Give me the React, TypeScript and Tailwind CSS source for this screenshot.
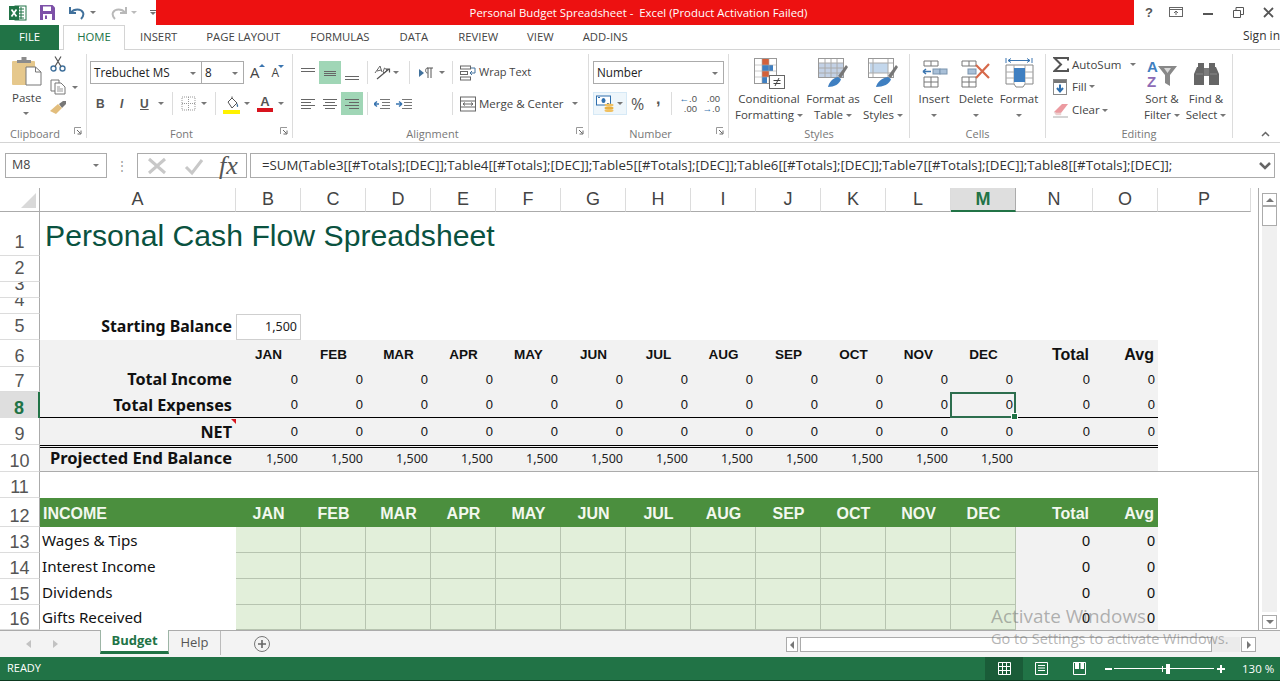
import React from "react"

// ++++++++++++++++++++++++++++++++++++++++++++++++++++++++++++++++++++++++++++++++++++++++++
// data
// ++++++++++++++++++++++++++++++++++++++++++++++++++++++++++++++++++++++++++++++++++++++++++

const months = ["JAN", "FEB", "MAR", "APR", "MAY", "JUN", "JUL", "AUG", "SEP", "OCT", "NOV", "DEC"]
const letters = ["B", "C", "D", "E", "F", "G", "H", "I", "J", "K", "L"]
const formula = "=SUM(Table3[[#Totals];[DEC]];Table4[[#Totals];[DEC]];Table5[[#Totals];[DEC]];Table6[[#Totals];[DEC]];Table7[[#Totals];[DEC]];Table8[[#Totals];[DEC]];"

const ui = "font-['Open_Sans',sans-serif]"
const arial = "font-['Liberation_Sans',sans-serif]"
const treb = "font-['Noto_Sans',sans-serif]"

// ++++++++++++++++++++++++++++++++++++++++++++++++++++++++++++++++++++++++++++++++++++++++++
// small bits
// ++++++++++++++++++++++++++++++++++++++++++++++++++++++++++++++++++++++++++++++++++++++++++

function Caret({ className = "" }: { className?: string }) {
    return <span className={`inline-block w-0 h-0 border-l-[3px] border-r-[3px] border-t-[3px] border-l-transparent border-r-transparent border-t-[#777] ${className}`} />
}

function Sep({ className = "" }: { className?: string }) {
    return <span className={`block w-px h-[23px] bg-[#dcdcdc] ${className}`} />
}

function Launcher({ className = "" }: { className?: string }) {
    return (
        <svg width="8" height="8" viewBox="0 0 8 8" className={`absolute bottom-[3px] ${className}`}>
            <path d="M0.5 7V0.5H7" fill="none" stroke="#999" />
            <path d="M3 3L6.5 6.5M7 3.5V7H3.5" fill="none" stroke="#666" />
        </svg>
    )
}

function Lines({ rows }: { rows: number[][] }) {
    return (
        <svg width="16" height="16" viewBox="0 0 16 16">
            {rows.map(([a, b, y], i) => <path key={i} d={`M${a} ${y + 0.5}H${b}`} stroke="#666" />)}
        </svg>
    )
}

function ToggleBox({ on, children, className = "" }: { on?: boolean; children: React.ReactNode; className?: string }) {
    return <span className={`flex w-[22px] h-[23px] items-center justify-center ${on ? "bg-[#a0d6b6]" : ""} ${className}`}>{children}</span>
}

function Big({ w, icon, top, bottom, caret }: { w: string; icon: React.ReactNode; top: string; bottom?: string; caret?: boolean }) {
    return (
        <div className={`${w} flex flex-col items-center pt-[4px] text-[11.5px] leading-[16px] text-[#444]`}>
            <div className="h-[31px] mb-[2px] flex items-center justify-center">{icon}</div>
            <span className="whitespace-nowrap">{top}</span>
            <span className="whitespace-nowrap flex items-center gap-[3px] h-[16px]">
                {bottom}
                {caret && <Caret />}
            </span>
        </div>
    )
}

function Group({ w, label, launcher, children }: { w: string; label: string; launcher?: boolean; children: React.ReactNode }) {
    return (
        <div className={`${w} h-[84px] shrink-0 border-r border-[#dcdcdc] relative`}>
            <div className="h-[73px]">{children}</div>
            <div className={`h-[11px] leading-[13px] text-center text-[11px] text-[#777] ${launcher ? "pr-[16px]" : ""}`}>{label}</div>
            {launcher && <Launcher className="right-[4px]" />}
        </div>
    )
}

// ++++++++++++++++++++++++++++++++++++++++++++++++++++++++++++++++++++++++++++++++++++++++++
// icons
// ++++++++++++++++++++++++++++++++++++++++++++++++++++++++++++++++++++++++++++++++++++++++++

const ExcelLogo = () => (
    <svg width="18" height="18" viewBox="0 0 18 18">
        <rect x="6" y="2" width="11" height="14" fill="#fff" stroke="#217346" />
        <path d="M10 5h5M10 8h5M10 11h5M10 14h5M12 3v12" stroke="#217346" />
        <rect x="0" y="2" width="10" height="14" fill="#217346" />
        <path d="M2.5 5.5L7.5 12.5M7.5 5.5L2.5 12.5" stroke="#fff" strokeWidth="1.7" />
    </svg>
)
const SaveIcon = () => (
    <svg width="15" height="15" viewBox="0 0 15 15">
        <path d="M0 0H12.5L15 2.5V15H0Z" fill="#7d51a8" />
        <rect x="3" y="1.5" width="8" height="4.5" fill="#fff" />
        <rect x="3" y="9" width="9" height="6" fill="#fff" />
        <rect x="5" y="10.5" width="2" height="3.5" fill="#7d51a8" />
    </svg>
)
const UndoIcon = ({ color }: { color: string }) => (
    <svg width="16" height="14" viewBox="0 0 16 14">
        <path d="M1 1V7H7" fill="none" stroke={color} strokeWidth="2" />
        <path d="M2 6.5C5 2.5 12 2.5 14 6.5C15 9 14 11 12 13" fill="none" stroke={color} strokeWidth="2" />
    </svg>
)
const PasteIcon = () => (
    <svg width="30" height="31" viewBox="0 0 30 31">
        <rect x="0" y="4" width="23" height="24" rx="1" fill="#e6c88c" />
        <path d="M5 5V3H9.5V0H14.5V3H19V6H5Z" fill="#8c8c8c" />
        <path d="M14 10H23.5L29 15V28H14Z" fill="#fff" stroke="#777" />
        <path d="M23.5 10V15H29" fill="none" stroke="#777" />
    </svg>
)
const ScissorsIcon = () => (
    <svg width="16" height="16" viewBox="0 0 16 16">
        <circle cx="3.5" cy="12.5" r="2.5" fill="none" stroke="#41719c" strokeWidth="1.4" />
        <circle cx="12.5" cy="12.5" r="2.5" fill="none" stroke="#41719c" strokeWidth="1.4" />
        <path d="M5 10.5L11 0.5M11 10.5L5 0.5" stroke="#555" strokeWidth="1.2" />
    </svg>
)
const CopyIcon = () => (
    <svg width="16" height="16" viewBox="0 0 16 16">
        <path d="M1 1H9V12H1Z" fill="#fff" stroke="#777" />
        <path d="M5 4H11L15 8V15H5Z" fill="#fff" stroke="#777" />
        <path d="M7 8H10M7 10H13M7 12H13" stroke="#999" />
    </svg>
)
const BrushIcon = () => (
    <svg width="17" height="14" viewBox="0 0 17 14">
        <path d="M9 3L13 0H16V3L12 7Z" fill="#777" />
        <path d="M0 10L8 3L12 7L6 13Z" fill="#e2bd7c" />
    </svg>
)
const BordersIcon = () => (
    <svg width="15" height="15" viewBox="0 0 15 15">
        <rect x="1" y="1" width="13" height="13" fill="none" stroke="#999" strokeDasharray="1 1" />
        <path d="M7.5 1V14M1 7.5H14" stroke="#999" strokeDasharray="1 1" />
    </svg>
)
const FillIcon = () => (
    <svg width="17" height="18" viewBox="0 0 17 18">
        <path d="M5 6L9 2L14 7L9 12Z" fill="#fff" stroke="#555" />
        <path d="M9 2V0.5" stroke="#555" />
        <path d="M14 7C15.5 9 15.5 11 14.5 11C13.5 11 13.5 9 14 7Z" fill="#41719c" />
        <rect x="0" y="14" width="17" height="4" fill="#fff200" />
    </svg>
)
const OrientationIcon = () => (
    <svg width="18" height="17" viewBox="0 0 18 17">
        <path d="M1 9L6 2L8 8M3 7L7 6" fill="none" stroke="#666" />
        <path d="M9 8L10.5 4L13 6L10 9Z" fill="none" stroke="#666" />
        <path d="M3 15L15 5M12 5H15.5V8.5" fill="none" stroke="#555" strokeWidth="1.2" />
    </svg>
)
const RtlIcon = () => (
    <svg width="14" height="12" viewBox="0 0 14 12">
        <path d="M0 2L5 6L0 10Z" fill="#41719c" />
        <path d="M8 1H14M9 1V11M12 1V11M8.5 1C6 1 6 6 8.5 6" fill="none" stroke="#555" />
    </svg>
)
const WrapIcon = () => (
    <svg width="17" height="16" viewBox="0 0 17 16">
        <rect x="0.5" y="1" width="10" height="3" fill="none" stroke="#666" />
        <rect x="0.5" y="6.5" width="7" height="3" fill="none" stroke="#666" />
        <rect x="0.5" y="12" width="10" height="3" fill="none" stroke="#666" />
        <path d="M11 3H15V8H10M12 6L10 8L12 10" fill="none" stroke="#41719c" />
    </svg>
)
const MergeIcon = () => (
    <svg width="17" height="16" viewBox="0 0 17 16">
        <rect x="0.5" y="1" width="15" height="14" fill="#fff" stroke="#666" />
        <path d="M1 5H15M1 11H15M3 8H13M3 8L5 6.5M3 8L5 9.5M13 8L11 6.5M13 8L11 9.5" fill="none" stroke="#666" />
    </svg>
)
const IndentIcon = ({ flip }: { flip?: boolean }) => (
    <svg width="16" height="12" viewBox="0 0 16 12">
        <path d="M6 1.5H16M8 4.5H16M8 7.5H16M6 10.5H16" stroke="#777" />
        {flip
            ? <path d="M5 6H0M0 6L3 3.5M0 6L3 8.5" fill="none" stroke="#3a75b0" strokeWidth="1.4" />
            : <path d="M0 6H6M6 6L3 3.5M6 6L3 8.5" fill="none" stroke="#3a75b0" strokeWidth="1.4" />}
    </svg>
)
const AccountingIcon = () => (
    <svg width="18" height="17" viewBox="0 0 18 17">
        <rect x="0.5" y="1" width="14" height="9" fill="#fff" stroke="#2f6fae" />
        <ellipse cx="7.5" cy="5.5" rx="2" ry="2.5" fill="#2f6fae" />
        <path d="M2 2.5h2M11 8.5h2" stroke="#2f6fae" />
        <ellipse cx="13" cy="10" rx="4.5" ry="1.5" fill="#f0c060" />
        <ellipse cx="13" cy="13" rx="4.5" ry="1.5" fill="#e8b040" />
        <ellipse cx="13" cy="15.5" rx="4.5" ry="1.5" fill="#f0c060" />
    </svg>
)
const CondFormatIcon = () => (
    <svg width="31" height="31" viewBox="0 0 31 31">
        <rect x="0.5" y="0.5" width="22" height="25" fill="#fff" stroke="#999" />
        <rect x="8" y="1" width="7" height="6" fill="#d3603a" />
        <rect x="8" y="7" width="11" height="6" fill="#3f7fc1" />
        <rect x="8" y="13" width="7" height="6" fill="#d3603a" />
        <rect x="8" y="19" width="5" height="6" fill="#3f7fc1" />
        <path d="M1 7H22M1 13H22M1 19H22M8 1V25M15 1V25" stroke="#aaa" fill="none" opacity="0.6" />
        <rect x="15.5" y="17.5" width="15" height="13" fill="#fff" stroke="#666" />
        <path d="M19.5 22.5H26.5M19.5 25.5H26.5M25 20L21 28" stroke="#444" fill="none" />
    </svg>
)
const TableIcon = () => (
    <svg width="31" height="31" viewBox="0 0 31 31">
        <rect x="0.5" y="0.5" width="25" height="19" fill="#fff" stroke="#999" />
        <rect x="1" y="5" width="24" height="14" fill="#c3d1e5" />
        <path d="M1 5H25M1 10H25M1 15H25M7 1V19M13 1V19M19 1V19" stroke="#aaa" fill="none" />
        <path d="M20 18L28 7L30 9L23 20Z" fill="#777" />
        <path d="M10 29C11 24 15 20 20 19L23 21C22 26 16 29 10 29Z" fill="#3f7fc1" />
    </svg>
)
const CellStyleIcon = () => (
    <svg width="31" height="31" viewBox="0 0 31 31">
        <rect x="0.5" y="0.5" width="25" height="19" fill="#fff" stroke="#999" />
        <rect x="2" y="5" width="18" height="10" fill="#c3d7ec" />
        <path d="M1 5H25M1 15H25M5 1V19M20 1V19" stroke="#aaa" fill="none" />
        <path d="M20 18L28 7L30 9L23 20Z" fill="#777" />
        <path d="M8 29C9 24 14 20 20 19L23 21C22 26 15 29 8 29Z" fill="#3f7fc1" />
    </svg>
)
const InsertIcon = () => (
    <svg width="27" height="28" viewBox="0 0 27 28">
        <path d="M3 1H17V6H3ZM10 1V6M3 17H17V27H3ZM10 17V27M3 22H17" fill="#fff" stroke="#777" />
        <rect x="12" y="9" width="7" height="5" fill="#a9c0d8" stroke="#7a94ae" />
        <rect x="19" y="9" width="7" height="5" fill="#a9c0d8" stroke="#7a94ae" />
        <path d="M10 11.5H2M2 11.5L5 9M2 11.5L5 14" stroke="#3a75b0" strokeWidth="1.5" fill="none" />
    </svg>
)
const DeleteIcon = () => (
    <svg width="31" height="28" viewBox="0 0 31 28">
        <path d="M1 1H15V6H1ZM8 1V6M1 17H15V27H1ZM8 17V27M1 22H15" fill="#fff" stroke="#777" />
        <rect x="7" y="9" width="8" height="5" fill="#a9c0d8" stroke="#7a94ae" />
        <path d="M15 5L28 18M28 4L15 18" stroke="#d6694a" strokeWidth="2.2" />
    </svg>
)
const FormatIcon = () => (
    <svg width="29" height="31" viewBox="0 0 29 31">
        <path d="M1 0V5M27 0V5M3 2.5H25M3 2.5L6 0.5M3 2.5L6 4.5M25 2.5L22 0.5M25 2.5L22 4.5" stroke="#3a75b0" fill="none" />
        <path d="M1 7H28V26H20L18 29H11L9 26H1Z" fill="#fff" stroke="#888" />
        <path d="M1 14H28M1 20H28M9 7V26M20 7V26" stroke="#aaa" fill="none" />
        <rect x="9" y="10" width="11" height="14" fill="#3f7fc1" />
    </svg>
)
const SigmaIcon = () => (
    <svg width="16" height="15" viewBox="0 0 16 15">
        <path d="M15 3.5V1H1.5L8 7.5L1.5 14H15V11.5" fill="none" stroke="#555" strokeWidth="2" />
    </svg>
)
const FillDownIcon = () => (
    <svg width="14" height="16" viewBox="0 0 14 16">
        <rect x="0.5" y="0.5" width="13" height="15" fill="#fff" stroke="#888" />
        <rect x="1" y="1" width="12" height="3" fill="#777" />
        <path d="M7 5.5V12M4 9L7 12.5L10 9" fill="none" stroke="#2f6fae" strokeWidth="2" />
    </svg>
)
const EraserIcon = () => (
    <svg width="16" height="15" viewBox="0 0 16 15">
        <path d="M1 9L9 1H15L8 10H3Z" fill="#ec9aa0" />
        <path d="M1 9L3 12H8L8 10H3Z" fill="#f5c8c8" stroke="#ddd" strokeWidth="0.5" />
        <path d="M0 14H15" stroke="#aaa" />
    </svg>
)
const SortIcon = () => (
    <svg width="31" height="29" viewBox="0 0 31 29">
        <text x="0" y="13" className={arial} fontSize="15" fontWeight="700" fill="#3f7fc1">A</text>
        <text x="0" y="28" className={arial} fontSize="15" fontWeight="700" fill="#8d6bb5">Z</text>
        <path d="M11 7H30L23 16V27L18 24V16Z" fill="#888" />
        <path d="M17 9H24L20.5 14Z" fill="#d8d8d8" />
    </svg>
)
const BinocularsIcon = () => (
    <svg width="27" height="24" viewBox="0 0 27 24">
        <path d="M1 23V12L4 5H5V1H11V23Z" fill="#666" />
        <path d="M26 23V12L23 5H22V1H16V23Z" fill="#666" />
        <path d="M3 12H10M17 12H24" stroke="#8a8a8a" />
        <rect x="11" y="6" width="5" height="8" fill="#7d7d7d" />
    </svg>
)

// ++++++++++++++++++++++++++++++++++++++++++++++++++++++++++++++++++++++++++++++++++++++++++
// ribbon
// ++++++++++++++++++++++++++++++++++++++++++++++++++++++++++++++++++++++++++++++++++++++++++

function TitleBar() {
    return (
        <div className="h-[25px] flex bg-white shrink-0">
            <div className="w-[156px] flex items-center pl-[9px]">
                <ExcelLogo />
                <span className="ml-[13px]"><SaveIcon /></span>
                <span className="ml-[14px]"><UndoIcon color="#41719c" /></span>
                <Caret className="ml-[5px]" />
                <span className="ml-[15px] -scale-x-100"><UndoIcon color="#b9b9b9" /></span>
                <Caret className="ml-[4px] opacity-50" />
                <span className="ml-[13px] flex flex-col items-center gap-[1px]">
                    <span className="w-[6px] h-px bg-[#666]" />
                    <Caret />
                </span>
            </div>
            <div className="w-[978px] bg-[#ed1111] text-white text-[11.4px] pr-[13px] flex items-center justify-center">
                Personal Budget Spreadsheet -&nbsp; Excel (Product Activation Failed)
            </div>
            <div className="flex-1 flex items-center pl-[11px] text-[#555]">
                <span className={`${arial} font-bold text-[13px] w-[24px]`}>?</span>
                <svg width="15" height="11" viewBox="0 0 15 11"><rect x="0.5" y="0.5" width="13" height="9" fill="none" stroke="#666" /><path d="M1 2.5H13M7 8V4M5 6L7 4L9 6" fill="none" stroke="#666" /></svg>
                <span className="w-[10px] h-[2px] bg-[#555] ml-[19px] mt-[3px]" />
                <svg width="11" height="11" viewBox="0 0 11 11" className="ml-[20px]"><path d="M0.5 3.5H7.5V10.5H0.5ZM3 3V0.5H10.5V7.5H8" fill="none" stroke="#555" /></svg>
                <svg width="11" height="11" viewBox="0 0 11 11" className="ml-[19px]"><path d="M1 1L10 10M10 1L1 10" stroke="#555" strokeWidth="1.8" /></svg>
            </div>
        </div>
    )
}

function TabRow() {
    const tabs = [
        ["INSERT", "ml-[15px]"],
        ["PAGE LAYOUT", "ml-[29px]"],
        ["FORMULAS", "ml-[30px]"],
        ["DATA", "ml-[30px]"],
        ["REVIEW", "ml-[30px]"],
        ["VIEW", "ml-[29px]"],
        ["ADD-INS", "ml-[29px]"],
    ]
    return (
        <div className="h-[25px] flex items-center bg-white shrink-0 text-[11.3px] text-[#444] border-b border-[#d4d4d4] relative">
            <div className="w-[59px] h-[25px] bg-[#217346] text-white flex items-center justify-center">FILE</div>
            <div className="w-[62px] h-[25px] ml-[4px] bg-white border border-b-0 border-[#d4d4d4] text-[#217346] flex items-center justify-center">HOME</div>
            {tabs.map(([t, c]) => <span key={t} className={c}>{t}</span>)}
            <span className="absolute right-0 top-[2px] text-[#333] text-[12px]">Sign in</span>
        </div>
    )
}

function Ribbon() {
    return (
        <div className="h-[93px] shrink-0 flex pt-[4px] bg-white border-b border-[#d4d4d4] text-[#444]">
            <Group w="w-[87px]" label="Clipboard" launcher>
                <div className="flex">
                    <div className="w-[50px] pl-[12px] flex flex-col items-start pt-[3px]">
                        <PasteIcon />
                        <span className="text-[11.5px] leading-[16px] mt-[2px] w-[27px] text-center">Paste</span>
                        <Caret className="ml-[11px] mt-[6px]" />
                    </div>
                    <div className="flex flex-col pt-[2px]">
                        <ScissorsIcon />
                        <span className="flex items-center mt-[7px] gap-[6px]"><CopyIcon /><Caret /></span>
                        <span className="mt-[6px]"><BrushIcon /></span>
                    </div>
                </div>
            </Group>

            <Group w="w-[206px]" label="Font" launcher>
                <div className="pt-[7px] pl-[3px]">
                    <div className="flex items-center h-[23px]">
                        <span className="w-[112px] h-[23px] border border-[#ababab] flex items-center justify-between pt-[1px] px-[3px] pr-[5px] text-[11.7px] text-[#222]">Trebuchet MS<Caret /></span>
                        <span className="w-[42px] h-[23px] border border-l-0 border-[#ababab] flex items-center justify-between pt-[1px] px-[3px] pr-[5px] text-[11.7px] text-[#222]">8<Caret /></span>
                        <span className={`${ui} ml-[6px] text-[15px] leading-none relative`}>A<span className="absolute -top-[1px] -right-[5px] w-0 h-0 border-l-[3px] border-r-[3px] border-b-[3px] border-l-transparent border-r-transparent border-b-[#3a75b0]" /></span>
                        <span className={`${ui} ml-[12px] text-[12px] leading-none relative`}>A<span className="absolute -top-[2px] -right-[5px] w-0 h-0 border-l-[3px] border-r-[3px] border-t-[3px] border-l-transparent border-r-transparent border-t-[#3a75b0]" /></span>
                    </div>
                    <div className="flex items-center h-[23px] mt-[8px] pl-[6px]">
                        <span className={`${arial} font-bold text-[12px] w-[24px] text-[#555]`}>B</span>
                        <span className={`${arial} italic font-bold text-[12px] w-[20px] text-[#555]`}>I</span>
                        <span className={`${arial} underline font-bold text-[12px] w-[18px] text-[#555]`}>U</span>
                        <Caret />
                        <Sep className="ml-[8px]" />
                        <span className="ml-[8px]"><BordersIcon /></span>
                        <Caret className="ml-[5px]" />
                        <Sep className="ml-[8px]" />
                        <span className="ml-[7px] mt-[3px]"><FillIcon /></span>
                        <Caret className="ml-[4px]" />
                        <span className="ml-[7px] flex flex-col items-center w-[16px]">
                            <span className={`${arial} font-bold text-[13px] leading-[12px] text-[#555]`}>A</span>
                            <span className="w-[16px] h-[4px] bg-[#d8141e]" />
                        </span>
                        <Caret className="ml-[5px]" />
                    </div>
                </div>
            </Group>

            <Group w="w-[296px]" label="Alignment" launcher>
                <div className="pt-[7px] pl-[4px]">
                    <div className="flex items-center h-[23px]">
                        <ToggleBox><Lines rows={[[1, 15, 3], [1, 15, 6]]} /></ToggleBox>
                        <ToggleBox on><Lines rows={[[2, 14, 6], [2, 14, 8], [2, 14, 10]]} /></ToggleBox>
                        <ToggleBox><Lines rows={[[1, 15, 11], [1, 15, 14]]} /></ToggleBox>
                        <Sep className="ml-[4px]" />
                        <span className="ml-[6px]"><OrientationIcon /></span>
                        <Caret className="ml-[1px]" />
                        <Sep className="ml-[10px]" />
                        <span className="ml-[9px]"><RtlIcon /></span>
                        <Caret className="ml-[6px]" />
                        <Sep className="ml-[7px]" />
                        <span className="ml-[7px]"><WrapIcon /></span>
                        <span className="ml-[2px] text-[11px]">Wrap Text</span>
                    </div>
                    <div className="flex items-center h-[23px] mt-[8px]">
                        <ToggleBox><Lines rows={[[1, 15, 3], [1, 11, 6], [1, 15, 9], [1, 11, 12]]} /></ToggleBox>
                        <ToggleBox><Lines rows={[[1, 15, 3], [3, 13, 6], [1, 15, 9], [3, 13, 12]]} /></ToggleBox>
                        <ToggleBox on><Lines rows={[[1, 15, 3], [5, 15, 6], [1, 15, 9], [5, 15, 12]]} /></ToggleBox>
                        <Sep className="ml-[4px]" />
                        <span className="ml-[6px]"><IndentIcon flip /></span>
                        <span className="ml-[6px]"><IndentIcon /></span>
                        <Sep className="ml-[40px]" />
                        <span className="ml-[7px]"><MergeIcon /></span>
                        <span className="ml-[2px] text-[11.5px]">Merge &amp; Center</span>
                        <Caret className="ml-[8px]" />
                    </div>
                </div>
            </Group>

            <Group w="w-[140px]" label="Number" launcher>
                <div className="pt-[7px] pl-[4px]">
                    <span className="w-[131px] h-[23px] border border-[#ababab] flex items-center justify-between pt-[1px] px-[3px] pr-[5px] text-[11.7px] text-[#222]">Number<Caret /></span>
                    <div className="flex items-center h-[23px] mt-[8px]">
                        <span className="w-[34px] h-[23px] border border-[#d6e9f6] bg-[#eef6fb] flex items-center pl-[2px] gap-[3px]"><AccountingIcon /><Caret /></span>
                        <span className="ml-[4px] w-[15px] text-[16px] text-[#555]">%</span>
                        <span className={`${arial} ml-[10px] w-[5px] -mt-[10px] font-bold text-[16px] leading-none text-[#555]`}>,</span>
                        <Sep className="ml-[10px]" />
                        <span className={`${arial} ml-[7px] w-[18px] text-[9.5px] leading-[10px] text-[#555] text-right`}><span className="text-[#3a75b0]">←</span>.0<br />.00</span>
                        <span className={`${arial} ml-[5px] w-[18px] text-[9.5px] leading-[10px] text-[#555] text-right`}>.00<br /><span className="text-[#3a75b0]">→</span>.0</span>
                    </div>
                </div>
            </Group>

            <Group w="w-[181px]" label="Styles">
                <div className="flex pl-[4px]">
                    <Big w="w-[72px]" icon={<CondFormatIcon />} top="Conditional" bottom="Formatting" caret />
                    <Big w="w-[56px]" icon={<TableIcon />} top="Format as" bottom="Table" caret />
                    <Big w="w-[44px]" icon={<CellStyleIcon />} top="Cell" bottom="Styles" caret />
                </div>
            </Group>

            <Group w="w-[136px]" label="Cells">
                <div className="flex pl-[3px]">
                    <Big w="w-[42px]" icon={<InsertIcon />} top="Insert" caret />
                    <Big w="w-[42px]" icon={<DeleteIcon />} top="Delete" caret />
                    <Big w="w-[44px]" icon={<FormatIcon />} top="Format" caret />
                </div>
            </Group>

            <Group w="w-[187px]" label="Editing">
                <div className="flex">
                    <div className="w-[95px] pl-[7px] text-[11.5px]">
                        <div className="h-[21px] flex items-center"><SigmaIcon /><span className="ml-[3px]">AutoSum</span><Caret className="ml-[9px]" /></div>
                        <div className="h-[23px] flex items-center"><FillDownIcon /><span className="ml-[5px]">Fill</span><Caret className="ml-[2px]" /></div>
                        <div className="h-[24px] flex items-center"><EraserIcon /><span className="ml-[3px]">Clear</span><Caret className="ml-[2px]" /></div>
                    </div>
                    <Big w="w-[42px]" icon={<SortIcon />} top="Sort &" bottom="Filter" caret />
                    <Big w="w-[46px]" icon={<BinocularsIcon />} top="Find &" bottom="Select" caret />
                </div>
            </Group>

            <div className="flex-1 flex justify-end items-end pr-[10px] pb-[5px]">
                <svg width="9" height="6" viewBox="0 0 9 6"><path d="M1 5L4.5 1.5L8 5" fill="none" stroke="#666" strokeWidth="1.5" /></svg>
            </div>
        </div>
    )
}

function FormulaBar() {
    return (
        <div className="h-[45px] shrink-0 flex pt-[10px] pb-[10px] pl-[5px] bg-white">
            <div className="w-[102px] border border-[#ababab] flex items-center justify-between pl-[6px] pr-[7px] text-[12.5px] text-[#444]">M8<Caret /></div>
            <div className="w-[30px] flex items-center justify-center text-[#999] text-[12px] leading-none">⋮</div>
            <div className="w-[110px] border border-[#ababab] flex items-center pl-[9px]">
                <svg width="20" height="20" viewBox="0 0 20 20"><path d="M2 3L18 17M18 3L2 17" stroke="#c8c8c8" strokeWidth="3" /></svg>
                <svg width="20" height="20" viewBox="0 0 20 20" className="ml-[17px]"><path d="M2 11L8 17L18 4" fill="none" stroke="#c8c8c8" strokeWidth="3" /></svg>
                <span className="ml-[15px] font-['Liberation_Serif',serif] italic text-[26px] leading-none text-[#555]">fx</span>
            </div>
            <div className="w-[1025px] ml-[3px] border border-[#ababab] flex items-center justify-between pt-[1px] pl-[11px] pr-[3px] text-[13.25px] text-[#333] whitespace-nowrap">
                {formula}
                <svg width="12" height="10" viewBox="0 0 12 10"><path d="M1 2L6 7L11 2" fill="none" stroke="#666" strokeWidth="2.5" /></svg>
            </div>
        </div>
    )
}

// ++++++++++++++++++++++++++++++++++++++++++++++++++++++++++++++++++++++++++++++++++++++++++
// sheet
// ++++++++++++++++++++++++++++++++++++++++++++++++++++++++++++++++++++++++++++++++++++++++++

function ColHead({ w, label, active }: { w: string; label: string; active?: boolean }) {
    return (
        <div className={`${w} h-[24px] shrink-0 flex items-center justify-center text-[18px] border-r ${active ? "bg-[#dedede] border-[#ababab] border-b-2 border-b-[#217346] text-[#217346] font-bold" : "border-[#dcdcdc] border-b border-b-[#ababab] text-[#444]"}`}>
            {label}
        </div>
    )
}

function Row({ n, h, active, children }: { n: number; h: string; active?: boolean; children?: React.ReactNode }) {
    return (
        <div className={`flex ${h}`}>
            <div className={`w-[40px] shrink-0 flex items-end justify-center overflow-hidden border-r ${arial} text-[18px] ${n >= 6 ? "leading-[20px]" : "pb-[2px] leading-[22px]"} ${active ? "bg-[#dedede] border-r-2 border-r-[#217346] text-[#217346] font-bold" : "border-r-[#ababab] text-[#555] border-b border-b-[#dcdcdc]"}`}>
                {n}
            </div>
            <div className="w-[1218px] shrink-0 flex">{children}</div>
        </div>
    )
}

function Num({ w = "w-[65px]", children, className = "" }: { w?: string; children?: React.ReactNode; className?: string }) {
    return <div className={`${w} shrink-0 flex items-center justify-end pr-[3px] ${className}`}>{children}</div>
}

function SummaryRow({ label, border = "", cursor, note }: { label: string; border?: string; cursor?: boolean; note?: boolean }) {
    return (
        <div className={`w-[1118px] bg-[#f2f2f2] flex ${border} ${arial} text-[13px] text-[#111]`}>
            <div className={`w-[196px] shrink-0 flex items-center justify-end pr-[4px] ${treb} font-bold text-[16.2px] relative`}>
                {label}
                {note && <span className="absolute top-0 right-0 w-0 h-0 border-l-[5px] border-b-[5px] border-l-transparent border-b-transparent border-t-[5px] border-t-[#d8141e] border-r-0" />}
            </div>
            {months.map((m) => (
                <Num key={m} className={cursor && m === "DEC" ? "relative" : ""}>
                    0
                    {cursor && m === "DEC" && (
                        <>
                            <span className="absolute -left-[1px] right-0 -top-[1px] -bottom-[1px] border-2 border-[#2d6e4e]" />
                            <span className="absolute -right-[2px] -bottom-[3px] w-[5px] h-[5px] bg-[#217346] border border-white box-content" />
                        </>
                    )}
                </Num>
            ))}
            <Num w="w-[77px]">0</Num>
            <Num>0</Num>
        </div>
    )
}

function IncomeRow({ n, h, label }: { n: number; h: string; label: string }) {
    return (
        <Row n={n} h={h}>
            <div className={`w-[196px] shrink-0 flex items-center pl-[2px] ${treb} text-[15.2px] text-[#111]`}>{label}</div>
            {months.map((m) => <div key={m} className="w-[65px] shrink-0 bg-[#e2efda] border-r border-b border-[#b7c4b0]" />)}
            <div className={`w-[142px] shrink-0 flex bg-[#f2f2f2] pt-[3px] ${arial} text-[14.5px] text-[#111]`}>
                <Num w="w-[77px]">0</Num>
                <Num>0</Num>
            </div>
        </Row>
    )
}

function Sheet() {
    return (
        <div className="flex-1 flex min-h-0">
            <div className="w-[1259px] shrink-0 border-r border-[#ababab] overflow-hidden">
                <div className={`flex ${arial} bg-white`}>
                    <div className="w-[40px] h-[24px] shrink-0 flex items-end justify-end pr-[3px] pb-[3px] border-b border-r border-[#ababab]">
                        <span className="w-0 h-0 border-l-[15px] border-b-[15px] border-l-transparent border-b-[#d9d9d9]" />
                    </div>
                    <ColHead w="w-[196px]" label="A" />
                    {letters.map((l) => <ColHead key={l} w="w-[65px]" label={l} />)}
                    <ColHead w="w-[65px]" label="M" active />
                    <ColHead w="w-[77px]" label="N" />
                    <ColHead w="w-[65px]" label="O" />
                    <div className="w-[93px] h-[24px] shrink-0 flex items-center justify-center text-[18px] text-[#444] border-b border-[#ababab] border-r border-r-[#dcdcdc]">P</div>
                </div>

                <Row n={1} h="h-[44px]">
                    <div className={`${arial} pl-[5px] pt-[6px] text-[30.2px] leading-[36px] text-[#0a5240] whitespace-nowrap`}>Personal Cash Flow Spreadsheet</div>
                </Row>
                <Row n={2} h="h-[26px]" />
                <Row n={3} h="h-[16px]" />
                <Row n={4} h="h-[16px]" />
                <Row n={5} h="h-[26px]">
                    <div className={`w-[196px] flex items-center justify-end pr-[4px] ${treb} font-bold text-[15.9px] text-[#111]`}>Starting Balance</div>
                    <Num className={`border border-[#cfcfcf] pr-[2px] ${treb} text-[12.5px] text-[#222]`}>1,500</Num>
                </Row>
                <Row n={6} h="h-[27px]">
                    <div className={`w-[1118px] bg-[#f2f2f2] flex ${arial} font-bold text-[#111]`}>
                        <div className="w-[196px] shrink-0" />
                        {months.map((m) => <div key={m} className="w-[65px] shrink-0 flex items-center justify-center pt-[3px] text-[13.5px]">{m}</div>)}
                        <div className="w-[77px] shrink-0 flex items-center justify-end pt-[2px] pr-[4px] text-[16px]">Total</div>
                        <div className="w-[65px] shrink-0 flex items-center justify-end pt-[2px] pr-[4px] text-[16px]">Avg</div>
                    </div>
                </Row>
                <Row n={7} h="h-[25px]"><SummaryRow label="Total Income" /></Row>
                <Row n={8} h="h-[26px]" active><SummaryRow label="Total Expenses" border="border-b border-black pt-[1px]" cursor /></Row>
                <Row n={9} h="h-[27px]"><SummaryRow label="NET" note border="pt-[1px]" /></Row>
                <Row n={10} h="h-[27px]">
                    <div className="w-[1218px] flex border-b border-[#ababab]">
                        <div className={`w-[1118px] bg-[#f2f2f2] flex border-t-[3px] border-double border-black ${treb} text-[12.5px] text-[#222]`}>
                            <div className="w-[196px] shrink-0 flex items-center justify-end pr-[4px] pb-[2px] font-bold text-[16.5px] text-[#111]">Projected End Balance</div>
                            {months.map((m) => <Num key={m}>1,500</Num>)}
                        </div>
                    </div>
                </Row>
                <Row n={11} h="h-[26px]" />
                <Row n={12} h="h-[29px]">
                    <div className={`w-[1118px] bg-[#4b8f3e] flex pt-[2px] ${arial} font-bold text-[16px] text-[#f3f8ef]`}>
                        <div className="w-[196px] shrink-0 flex items-center pl-[3px]">INCOME</div>
                        {months.map((m) => <div key={m} className="w-[65px] shrink-0 flex items-center justify-center">{m}</div>)}
                        <div className="w-[77px] shrink-0 flex items-center justify-end pr-[4px]">Total</div>
                        <div className="w-[65px] shrink-0 flex items-center justify-end pr-[4px]">Avg</div>
                    </div>
                </Row>
                <IncomeRow n={13} h="h-[26px]" label="Wages & Tips" />
                <IncomeRow n={14} h="h-[26px]" label="Interest Income" />
                <IncomeRow n={15} h="h-[26px]" label="Dividends" />
                <IncomeRow n={16} h="h-[25px]" label="Gifts Received" />
            </div>

            <div className="flex-1 pl-[3px] pt-[5px] pb-[1px] flex flex-col">
                <div className="w-[15px] h-[13px] border border-[#ababab] bg-white flex items-center justify-center">
                    <span className="w-0 h-0 border-l-[4px] border-r-[4px] border-b-[4px] border-l-transparent border-r-transparent border-b-[#777]" />
                </div>
                <div className="w-[15px] flex-1 bg-[#f0f0f0]">
                    <div className="w-[15px] h-[20px] border border-[#ababab] bg-white" />
                </div>
                <div className="w-[15px] h-[14px] mt-[3px] border border-[#ababab] bg-white flex items-center justify-center">
                    <span className="w-0 h-0 border-l-[4px] border-r-[4px] border-t-[4px] border-l-transparent border-r-transparent border-t-[#777]" />
                </div>
            </div>
        </div>
    )
}

function SheetTabs() {
    return (
        <div className="h-[27px] shrink-0 flex bg-[#f3f3f3] border-t border-[#ababab] text-[13px] text-[#555]">
            <div className="w-[100px] flex items-center pl-[26px] gap-[22px]">
                <span className="w-0 h-0 border-y-[4px] border-r-[5px] border-y-transparent border-r-[#c2c2c2]" />
                <span className="w-0 h-0 border-y-[4px] border-l-[5px] border-y-transparent border-l-[#c2c2c2]" />
            </div>
            <div className={`w-[69px] h-[24px] -mt-px bg-white border-x border-b-[3px] border-[#9db5a6] border-b-[#217346] flex items-center justify-center font-bold text-[#217346]`}>Budget</div>
            <div className="w-[52px] h-[24px] border-r border-[#bbb] flex items-center justify-center">Help</div>
            <svg width="18" height="18" viewBox="0 0 18 18" className="ml-[32px] mt-[4px]">
                <circle cx="9" cy="9" r="7.5" fill="none" stroke="#777" />
                <path d="M5 9H13M9 5V13" stroke="#666" strokeWidth="1.6" />
            </svg>
            <div className="ml-[515px] mt-[6px] h-[15px] w-[470px] flex">
                <div className="w-[12px] h-[15px] border border-[#ababab] bg-white flex items-center justify-center">
                    <span className="w-0 h-0 border-y-[4px] border-r-[4px] border-y-transparent border-r-[#777]" />
                </div>
                <div className="flex-1 bg-[#ebebeb] ml-[2px] mr-[1px]">
                    <div className="w-[412px] h-[15px] border border-[#ababab] bg-white" />
                </div>
                <div className="w-[15px] h-[15px] border border-[#ababab] bg-white flex items-center justify-center">
                    <span className="w-0 h-0 border-y-[4px] border-l-[4px] border-y-transparent border-l-[#777]" />
                </div>
            </div>
        </div>
    )
}

function StatusBar() {
    return (
        <div className="h-[24px] shrink-0 bg-[#217346] border-b border-[#0d3a20] flex items-center text-white text-[11px]">
            <span className="pl-[7px] w-[985px]">READY</span>
            <div className="w-[38px] h-[23px] bg-[#1a5c38] flex items-center justify-center">
                <svg width="13" height="13" viewBox="0 0 13 13"><path d="M0.5 0.5H12.5V12.5H0.5ZM0.5 4.5H12.5M0.5 8.5H12.5M4.5 0.5V12.5M8.5 0.5V12.5" fill="none" stroke="#fff" /></svg>
            </div>
            <svg width="13" height="13" viewBox="0 0 13 13" className="ml-[12px]"><path d="M0.5 0.5H12.5V12.5H0.5Z" fill="none" stroke="#fff" /><path d="M3 3.5H10M3 6H10M3 8.5H10" stroke="#fff" /></svg>
            <svg width="13" height="13" viewBox="0 0 13 13" className="ml-[25px]"><path d="M0.5 0.5H12.5V12.5H0.5Z" fill="none" stroke="#fff" /><path d="M2 1H6V7H2ZM7.5 1H11V7H7.5Z" fill="#fff" /></svg>
            <span className="w-[7px] h-[2px] bg-white ml-[19px]" />
            <div className="ml-[2px] w-[100px] h-px bg-white flex items-center justify-center">
                <span className="w-px h-[6px] bg-white ml-[4px]" />
                <span className="w-[4px] h-[10px] bg-white ml-[3px]" />
            </div>
            <svg width="8" height="8" viewBox="0 0 8 8" className="ml-[3px]"><path d="M0 4H8M4 0V8" stroke="#fff" strokeWidth="2" /></svg>
            <span className="ml-[17px] text-[11.5px]">130 %</span>
        </div>
    )
}

// ++++++++++++++++++++++++++++++++++++++++++++++++++++++++++++++++++++++++++++++++++++++++++
// code
// ++++++++++++++++++++++++++++++++++++++++++++++++++++++++++++++++++++++++++++++++++++++++++

export default function App() {
    return (
        <div className={`w-[1280px] h-[681px] flex flex-col overflow-hidden relative bg-white ${ui}`}>
            <TitleBar />
            <TabRow />
            <Ribbon />
            <FormulaBar />
            <Sheet />
            <SheetTabs />
            <StatusBar />

            {/* windows watermark */}
            <div className="absolute left-[991px] top-[603px] pointer-events-none text-[#6b6b6b]/50 whitespace-nowrap">
                <div className="text-[18.9px] leading-[26px]">Activate Windows</div>
                <div className="text-[14.5px] leading-[20px]">Go to Settings to activate Windows.</div>
            </div>
        </div>
    )
}
